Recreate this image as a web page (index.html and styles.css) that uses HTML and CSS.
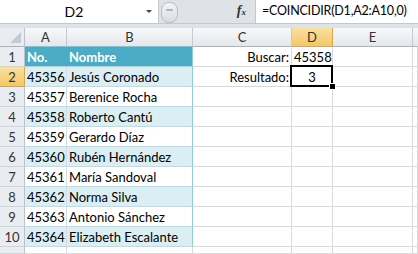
FILE: index.html
```html
<!DOCTYPE html>
<html lang="es">
<head>
    <meta charset="UTF-8">
    <meta name="viewport" content="width=device-width, initial-scale=1.0">
    <title>COINCIDIR - Excel</title>
    <link rel="stylesheet" href="styles.css">
</head>
<body>
    <div class="formula-bar">
        <div class="name-box">
            <span class="name-text">D2</span>
            <span class="name-arrow"></span>
        </div>
        <div class="grip"><span></span></div>
        <div class="fx">f<sub>x</sub></div>
        <div class="formula-input">=COINCIDIR(D1,A2:A10,0)</div>
    </div>

    <div class="sheet">
        <!-- column headers -->
        <div class="corner"><span class="corner-tri"></span></div>
        <div class="col-hdr">A</div>
        <div class="col-hdr">B</div>
        <div class="col-hdr">C</div>
        <div class="col-hdr active">D</div>
        <div class="col-hdr">E</div>
        <div class="col-hdr last"></div>

        <!-- row 1 -->
        <div class="row-hdr">1</div>
        <div class="cell tbl-head col-a">No.</div>
        <div class="cell tbl-head col-b">Nombre</div>
        <div class="cell right">Buscar:</div>
        <div class="cell">45358</div>
        <div class="cell"></div>
        <div class="cell"></div>

        <!-- row 2 -->
        <div class="row-hdr active">2</div>
        <div class="cell band col-a right">45356</div>
        <div class="cell band col-b">Jesús Coronado</div>
        <div class="cell right">Resultado:</div>
        <div class="cell center selected">3<span class="fill-handle"></span></div>
        <div class="cell"></div>
        <div class="cell"></div>

        <!-- row 3 -->
        <div class="row-hdr">3</div>
        <div class="cell plain col-a right">45357</div>
        <div class="cell plain col-b">Berenice Rocha</div>
        <div class="cell"></div>
        <div class="cell"></div>
        <div class="cell"></div>
        <div class="cell"></div>

        <!-- row 4 -->
        <div class="row-hdr">4</div>
        <div class="cell band col-a right">45358</div>
        <div class="cell band col-b">Roberto Cantú</div>
        <div class="cell"></div>
        <div class="cell"></div>
        <div class="cell"></div>
        <div class="cell"></div>

        <!-- row 5 -->
        <div class="row-hdr">5</div>
        <div class="cell plain col-a right">45359</div>
        <div class="cell plain col-b">Gerardo Díaz</div>
        <div class="cell"></div>
        <div class="cell"></div>
        <div class="cell"></div>
        <div class="cell"></div>

        <!-- row 6 -->
        <div class="row-hdr">6</div>
        <div class="cell band col-a right">45360</div>
        <div class="cell band col-b">Rubén Hernández</div>
        <div class="cell"></div>
        <div class="cell"></div>
        <div class="cell"></div>
        <div class="cell"></div>

        <!-- row 7 -->
        <div class="row-hdr">7</div>
        <div class="cell plain col-a right">45361</div>
        <div class="cell plain col-b">María Sandoval</div>
        <div class="cell"></div>
        <div class="cell"></div>
        <div class="cell"></div>
        <div class="cell"></div>

        <!-- row 8 -->
        <div class="row-hdr">8</div>
        <div class="cell band col-a right">45362</div>
        <div class="cell band col-b">Norma Silva</div>
        <div class="cell"></div>
        <div class="cell"></div>
        <div class="cell"></div>
        <div class="cell"></div>

        <!-- row 9 -->
        <div class="row-hdr">9</div>
        <div class="cell plain col-a right">45363</div>
        <div class="cell plain col-b">Antonio Sánchez</div>
        <div class="cell"></div>
        <div class="cell"></div>
        <div class="cell"></div>
        <div class="cell"></div>

        <!-- row 10 -->
        <div class="row-hdr">10</div>
        <div class="cell band col-a right">45364</div>
        <div class="cell band col-b">Elizabeth Escalante</div>
        <div class="cell"></div>
        <div class="cell"></div>
        <div class="cell"></div>
        <div class="cell"></div>

        <!-- row 11, only its top shows -->
        <div class="row-hdr"></div>
        <div class="cell"></div>
        <div class="cell"></div>
        <div class="cell"></div>
        <div class="cell"></div>
        <div class="cell"></div>
        <div class="cell"></div>
    </div>
</body>
</html>
```

FILE: styles.css
```css
html, body {
    margin: 0;
    padding: 0;
}
body {
    width: 418px;
    height: 254px;
    overflow: hidden;
    background: #dfe3e8;
    font-family: Lato, "Open Sans", sans-serif;
    font-size: 13px;
    color: #000;
}
.formula-bar {
    display: flex;
    height: 23px;
    border-bottom: 1px solid #c3c8cf;
}
.name-box {
    width: 158px;
    background: #fff;
    border-right: 1px solid #c3c8cf;
    display: flex;
    align-items: center;
}
.name-text {
    flex: 1;
    text-align: center;
    font-size: 14px;
    padding-left: 6px;
}
.name-arrow {
    width: 0;
    height: 0;
    border-left: 3px solid transparent;
    border-right: 3px solid transparent;
    border-top: 3px solid #444;
    margin: 0 6px 0 4px;
}
.grip {
    width: 15px;
    height: 19px;
    margin: 2px 0 0 2px;
    border: 1px solid #b9bec6;
    border-radius: 8px;
    background: linear-gradient(#f4f5f7, #d8dce2);
    display: flex;
    justify-content: center;
}
.grip span {
    width: 7px;
    height: 2px;
    margin-top: 6px;
    background: #b0b5bc;
    border-radius: 1px;
}
.fx {
    width: 68px;
    text-align: right;
    padding-right: 9px;
    font-family: "Liberation Serif", serif;
    font-style: italic;
    font-weight: bold;
    font-size: 14px;
    line-height: 22px;
    color: #333;
}
.fx sub {
    font-size: 9px;
    vertical-align: 0;
}
.formula-input {
    flex: 1;
    background: #fff;
    border-left: 1px solid #c3c8cf;
    padding-left: 6px;
    line-height: 22px;
    font-size: 12.5px;
    letter-spacing: -0.2px;
    white-space: nowrap;
    overflow: hidden;
}
.sheet {
    margin-top: 4px;
    display: grid;
    grid-template-columns: 25px 42px 126px 99px 41px 80px 1fr;
    grid-template-rows: 19px repeat(10, 20px) 7px;
    background: #fff;
}
.corner,
.col-hdr,
.row-hdr {
    box-sizing: border-box;
    color: #333;
    text-align: center;
    line-height: 19px;
}
.corner {
    background: #e9ecf0;
    border-right: 1px solid #bcc3cc;
    border-bottom: 1px solid #aab3be;
    position: relative;
}
.corner-tri {
    position: absolute;
    right: 3px;
    bottom: 3px;
    width: 0;
    height: 0;
    border-left: 11px solid transparent;
    border-bottom: 11px solid #c5cad1;
}
.col-hdr {
    background: linear-gradient(#f7f8fa, #e4e7eb);
    border-right: 1px solid #c5cad2;
    border-bottom: 1px solid #aab3be;
}
.col-hdr.last {
    border-right: none;
}
.row-hdr {
    background: #e9ecf0;
    border-right: 1px solid #bcc3cc;
    border-bottom: 1px solid #cfd4db;
    line-height: 20px;
}
.col-hdr.active,
.row-hdr.active {
    background: linear-gradient(#f9e0a4, #f3c766);
    border-right-color: #d8a84c;
    border-bottom-color: #d8a84c;
}
.cell {
    box-sizing: border-box;
    border-right: 1px solid #d9d9d9;
    border-bottom: 1px solid #d9d9d9;
    padding: 0 2px;
    line-height: 21px;
    white-space: nowrap;
    overflow: hidden;
    position: relative;
}
.right {
    text-align: right;
}
.center {
    text-align: center;
}
.tbl-head {
    background: #4bacc6;
    color: #fff;
    font-weight: bold;
    border-bottom-color: #a5d5e2;
}
.tbl-head.col-a {
    border-right-color: #4bacc6;
    text-align: left;
}
.band {
    background: #daeef3;
    border-bottom-color: #b6dde8;
}
.plain {
    border-bottom-color: #b6dde8;
}
.col-a {
    border-right-color: #d6dde2;
}
.col-b {
    border-right-color: #92cddc;
}
.selected {
    overflow: visible;
}
.selected::after {
    content: "";
    position: absolute;
    left: -2px;
    top: -2px;
    right: -1px;
    bottom: -1px;
    border: 2px solid #000;
}
.fill-handle {
    position: absolute;
    right: -4px;
    bottom: -4px;
    width: 5px;
    height: 5px;
    background: #000;
    border: 1px solid #fff;
    z-index: 2;
}
```
